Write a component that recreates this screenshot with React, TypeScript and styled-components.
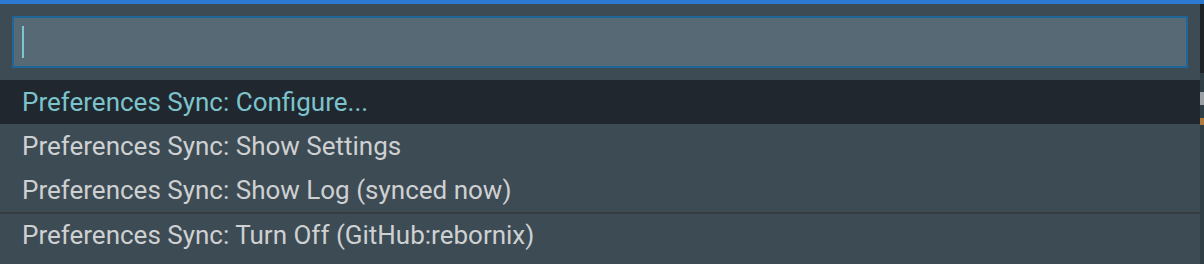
import React from "react";
import styled, { createGlobalStyle } from "styled-components";

const GlobalStyle = createGlobalStyle`
  html, body {
    margin: 0;
    padding: 0;
    background: #3c4b54;
    overflow: hidden;
  }
  body {
    font-family: Roboto, "Liberation Sans", sans-serif;
    -webkit-font-smoothing: antialiased;
  }
`;

const Page = styled.div`
  width: 1204px;
  height: 264px;
  display: flex;
  flex-direction: column;
`;

const TopBar = styled.div`
  height: 4px;
  background: #2c79d1;
  flex: none;
`;

const Body = styled.div`
  flex: 1;
  display: flex;
`;

const Widget = styled.div`
  width: 1200px;
  background: #3c4b54;
  display: flex;
  flex-direction: column;
`;

const Header = styled.div`
  padding: 12px;
`;

const InputBox = styled.div`
  height: 52px;
  box-sizing: border-box;
  border: 2px solid #1e6598;
  background: #576974;
  display: flex;
  align-items: center;
  padding-left: 8px;
`;

const Caret = styled.div`
  width: 2px;
  height: 32px;
  background: #7cc6ce;
`;

const List = styled.div`
  display: flex;
  flex-direction: column;
`;

const Row = styled.div<{ selected?: boolean; separator?: boolean }>`
  height: 44px;
  box-sizing: border-box;
  padding-left: 22px;
  display: flex;
  align-items: center;
  font-size: 26px;
  color: ${({ selected }) => (selected ? "#7cc3cc" : "#cfd0d1")};
  background: ${({ selected }) => (selected ? "#20272e" : "transparent")};
  border-top: ${({ separator }) => (separator ? "2px solid #363c41" : "none")};
  white-space: nowrap;
`;

const SideStrip = styled.div`
  width: 4px;
  display: flex;
  flex-direction: column;
  background: #2f3d45;
`;

const StripTop = styled.div`
  height: 69px;
  background: #1e2328;
`;

const StripMark = styled.div<{ color: string; size: number; gap: number }>`
  height: ${({ size }) => size}px;
  margin-top: ${({ gap }) => gap}px;
  background: ${({ color }) => color};
`;

const items = [
  { label: "Preferences Sync: Configure...", selected: true },
  { label: "Preferences Sync: Show Settings" },
  { label: "Preferences Sync: Show Log (synced now)" },
  { label: "Preferences Sync: Turn Off (GitHub:rebornix)", separator: true },
];

export default function App() {
  return (
    <>
      <GlobalStyle />
      <Page>
        <TopBar />
        <Body>
          <Widget>
            <Header>
              <InputBox>
                <Caret />
              </InputBox>
            </Header>
            <List>
              {items.map((item) => (
                <Row
                  key={item.label}
                  selected={item.selected}
                  separator={item.separator}
                >
                  {item.label}
                </Row>
              ))}
            </List>
          </Widget>
          <SideStrip>
            <StripTop />
            <StripMark color="#9aa0a3" size={13} gap={19} />
            <StripMark color="#b07a3c" size={7} gap={13} />
          </SideStrip>
        </Body>
      </Page>
    </>
  );
}
